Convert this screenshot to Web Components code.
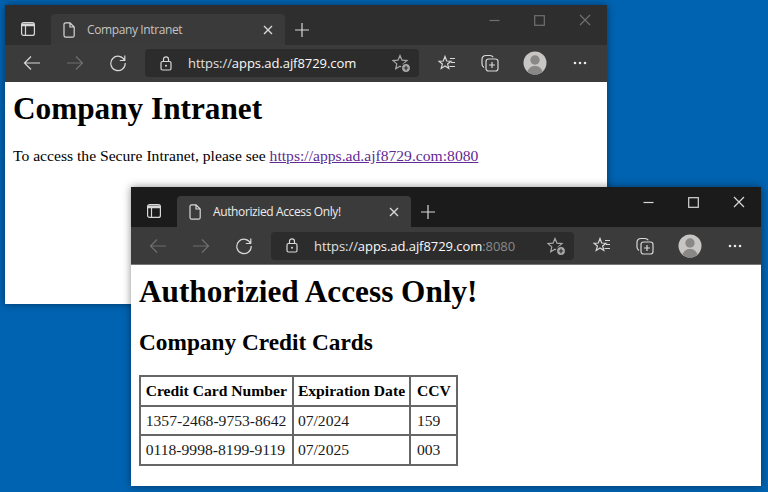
<!DOCTYPE html>
<html>
<head>
<meta charset="utf-8">
<title>Intranet</title>
<style>
  html, body { margin: 0; height: 100%; }
  body { background: #0063b1; overflow: hidden; position: relative; width: 768px; height: 492px; }
  browser-window.back { left: 5px; top: 5px; width: 602px; height: 299px; --address-width: 274px; }
  browser-window.front { left: 131px; top: 187px; width: 630px; height: 299px; --address-width: 303px; }
  a { color: #5f2a94; }
</style>
</head>
<body>
<browser-window class="back" tab-title="Company Intranet" host="https://apps.ad.ajf8729.com" inactive>
  <page-text>
    <h1 slot="title">Company Intranet</h1>
    <p>To access the Secure Intranet, please see <a href="#">https://apps.ad.ajf8729.com:8080</a></p>
  </page-text>
</browser-window>
<browser-window class="front" tab-title="Authorizied Access Only!" host="https://apps.ad.ajf8729.com" port=":8080">
  <page-text>
    <h1 slot="title">Authorizied Access Only!</h1>
    <h2>Company Credit Cards</h2>
    <card-table></card-table>
  </page-text>
</browser-window>

<template id="browser-window-tpl">
  <style>
    :host {
      display: flex;
      flex-direction: column;
      position: absolute;
      background: #fff;
      box-shadow: 0 0 8px rgba(0, 0, 0, .45);
      font-family: "Open Sans", "Noto Sans", sans-serif;
    }
    .strip { height: 40px; background: #1b1b1b; display: flex; align-items: flex-end; flex: none; position: relative; }
    :host([inactive]) .strip { background: #2e2e2e; }
    .tabs-btn { width: 44px; height: 32px; display: flex; align-items: center; justify-content: center; margin-left: 1px; margin-right: 1px; flex: none; }
    .tab { width: 234px; height: 31px; background: #3b3b3b; border-radius: 4px 4px 0 0; display: flex; align-items: center; flex: none; color: #ececec; font-size: 12px; letter-spacing: -.38px; }
    :host([inactive]) .tab { background: #3a3a3a; color: #c4c4c4; }
    .tab .page { margin-left: 12px; margin-right: 12px; flex: none; }
    .tab .label { flex: 1; white-space: nowrap; }
    .tab .close { margin-right: 12px; flex: none; }
    .plus { margin: 0 0 7px 9px; flex: none; }
    .caption { position: absolute; top: 0; right: 0; display: flex; }
    .caption span { width: 45px; height: 30px; display: flex; align-items: center; justify-content: center; }
    .bar { height: 38px; background: #3b3b3b; display: flex; align-items: center; flex: none; border-bottom: 1px solid #777; box-sizing: border-box; padding-left: 5px; }
    :host([inactive]) .bar { height: 37px; border-bottom-color: #3b3b3b; }
    .nav { width: 43px; display: flex; justify-content: center; flex: none; }
    .address { width: var(--address-width); height: 28px; margin-left: 6px; background: #2c2c2c; border-radius: 4px; display: flex; align-items: center; flex: none; position: relative; box-sizing: border-box; padding-left: 15px; font-size: 13px; font-weight: 500; color: #fafafa; white-space: nowrap; letter-spacing: -.06px; }
    .address .lock { margin-right: 16px; flex: none; }
    .address .port { color: #8a8a8a; font-weight: 400; }
    .address .scheme { color: #e0e0e0; }
    .address .fav { position: absolute; right: 8px; top: 5px; }
    .tools { display: flex; align-items: center; margin-left: 5px; }
    .tools span { width: 44.5px; display: flex; justify-content: center; align-items: center; }
    .tools .star { margin-left: 2px; }
    .tools .coll { margin-right: 2px; }
    .content { flex: 1; min-height: 0; overflow: hidden; background: #fff; }
    svg { display: block; fill: none; stroke: #d8d8d8; stroke-width: 1.2; }
    :host([inactive]) .caption svg { stroke: #707070; }
    .dim svg { stroke: #6f6f6f; }
    :host([inactive]) .dim-back svg { stroke: #d8d8d8; }
    :host(:not([inactive])) .dim-back svg { stroke: #6f6f6f; }
  </style>
  <div class="strip">
    <div class="tabs-btn">
      <svg width="16" height="16" viewBox="0 0 16 16"><rect x="1.6" y="1.6" width="12.8" height="12.8" rx="2"/><path d="M5.5 5v9.4M1.6 4.600h12.800"/><path d="M2 2.500h12v2H2z" fill="#d8d8d8" stroke="none"/></svg>
    </div>
    <div class="tab">
      <svg class="page" width="12" height="16" viewBox="0 0 12 16"><path d="M1 2.400a1.600 1.600 0 0 1 1.600-1.600H7L11.200 5v8.400A1.800 1.800 0 0 1 9.400 15.200H2.800A1.800 1.800 0 0 1 1 13.400zM7 .8V5h4.200"/></svg>
      <span class="label" id="title"></span>
      <svg class="close" width="10" height="10" viewBox="0 0 10 10"><path d="M1 1l8 8M9 1l-8 8" stroke-width="1.400"/></svg>
    </div>
    <svg class="plus" width="16" height="16" viewBox="0 0 16 16"><path d="M8 1v14M1 8h14"/></svg>
    <div class="caption">
      <span><svg width="11" height="11" viewBox="0 0 11 11"><path d="M.5 5.500h10"/></svg></span>
      <span><svg width="11" height="11" viewBox="0 0 11 11"><rect x=".7" y=".7" width="9.600" height="9.600"/></svg></span>
      <span><svg width="12" height="12" viewBox="0 0 12 12"><path d="M1 1l10 10M11 1L1 11"/></svg></span>
    </div>
  </div>
  <div class="bar">
    <span class="nav dim-back"><svg width="18" height="16" viewBox="0 0 18 16"><path d="M17 8H1.500M8 1.500L1.500 8 8 14.500"/></svg></span>
    <span class="nav dim"><svg width="18" height="16" viewBox="0 0 18 16"><path d="M1 8h15.500M10 1.500L16.500 8 10 14.500"/></svg></span>
    <span class="nav"><svg width="18" height="18" viewBox="0 0 18 18"><path d="M15.600 6.500A7.200 7.200 0 1 0 16.200 9M15.800 1.500v5h-5"/></svg></span>
    <div class="address">
      <svg class="lock" width="12" height="15" viewBox="0 0 12 15"><rect x="1" y="5.500" width="10" height="8.500" rx="1.500"/><path d="M3.500 5.500V3.300a2.500 2.500 0 0 1 5 0v2.200"/><circle cx="6" cy="9.800" r="1" fill="#d8d8d8" stroke="none"/></svg>
      <span><span class="scheme">https://</span><span id="host"></span><span class="port" id="port"></span></span>
      <svg class="fav" width="19" height="19" viewBox="0 0 19 19"><path d="M8 1.500l2 4.700 5 .4-3.800 3.300 1 4.900L8 12.300l-4.300 2.500 1.100-4.900L1 6.600l5-.4z" stroke="#a8a8a8"/><circle cx="14" cy="14" r="4.500" fill="#a8a8a8" stroke="#2c2c2c"/><path d="M14 11.800v4.400M11.800 14h4.400" stroke="#2c2c2c"/></svg>
    </div>
    <div class="tools">
      <span><svg class="star" width="18" height="17" viewBox="0 0 18 17"><path d="M7 1.500L8.700 6l4.300.2-3.400 2.800 1.200 4.300L7 10.900l-3.800 2.500 1.200-4.400L1 6.200 5.300 6zM12 3.500h5M13 7.500h4M11.500 11.500h5.500"/></svg></span>
      <span><svg class="coll" width="18" height="18" viewBox="0 0 18 18"><path d="M3 13.500C1.500 12.500 1 11.500 1 10V5.500C1 3 2.500 1.500 5 1.500h4c1.500 0 2.500.5 3.300 1.800"/><rect x="5" y="5" width="12" height="12" rx="2.500"/><path d="M11 8v6M8 11h6"/></svg></span>
      <span><svg width="24" height="24" viewBox="0 0 24 24" style="stroke:none"><circle cx="12" cy="12" r="11.500" fill="#c8c6c4"/><circle cx="12" cy="9" r="4.700" fill="#8a8886"/><path d="M4.500 20.700C5.500 16.800 8.500 15 12 15s6.500 1.800 7.500 5.700a11.500 11.500 0 0 1-15 0z" fill="#8a8886"/></svg></span>
      <span><svg width="14" height="4" viewBox="0 0 14 4" style="stroke:none;fill:#e8e8e8"><circle cx="2" cy="2" r="1.300"/><circle cx="7" cy="2" r="1.300"/><circle cx="12" cy="2" r="1.300"/></svg></span>
    </div>
  </div>
  <div class="content"><slot></slot></div>
</template>

<template id="page-text-tpl">
  <style>
    :host { display: block; padding: 8px; font-family: "Liberation Serif", "Times New Roman", serif; font-size: 15.63px; color: #000; }
    ::slotted(h1) { font-size: 31.25px; font-weight: bold; line-height: 36px; margin: 1px 0 0; }
    ::slotted(p) { margin: 20px 0 0; line-height: 18px; }
    ::slotted(h2) { font-size: 23.3px; font-weight: bold; line-height: 27px; margin: 19px 0 0; }
    ::slotted(card-table) { margin-top: 19px; }
  </style>
  <slot name="title"></slot>
  <slot></slot>
</template>

<template id="card-table-tpl">
  <style>
    :host { display: block; font-family: "Liberation Serif", "Times New Roman", serif; font-size: 15.63px; color: #000; }
    table { border-collapse: collapse; border: 2px solid #666; }
    th, td { border: 2px solid #666; padding: 5px 4.7px; text-align: left; line-height: 17.5px; white-space: nowrap; }
    th:nth-child(2), td:nth-child(2) { padding: 5px 4.3px; }
    th:nth-child(3), td:nth-child(3) { padding: 5px 5.6px; }
    th { font-weight: bold; }
    td { color: #1a1a1a; }
  </style>
  <table>
    <tr><th>Credit Card Number</th><th>Expiration Date</th><th>CCV</th></tr>
    <tr><td>1357-2468-9753-8642</td><td>07/2024</td><td>159</td></tr>
    <tr><td>0118-9998-8199-9119</td><td>07/2025</td><td>003</td></tr>
  </table>
</template>

<script>
  class BrowserWindow extends HTMLElement {
    constructor() {
      super();
      this.shadow = this.attachShadow({ mode: 'open' });
      this.shadow.appendChild(document.getElementById('browser-window-tpl').content.cloneNode(true));
    }

    connectedCallback() {
      this.shadow.getElementById('title').textContent = this.getAttribute('tab-title');
      this.shadow.getElementById('host').textContent = this.getAttribute('host').replace('https://', '');
      this.shadow.getElementById('port').textContent = this.getAttribute('port') || '';
    }
  }

  class PageText extends HTMLElement {
    constructor() {
      super();
      this.attachShadow({ mode: 'open' }).appendChild(document.getElementById('page-text-tpl').content.cloneNode(true));
    }
  }

  class CardTable extends HTMLElement {
    constructor() {
      super();
      this.attachShadow({ mode: 'open' }).appendChild(document.getElementById('card-table-tpl').content.cloneNode(true));
    }
  }

  customElements.define('browser-window', BrowserWindow);
  customElements.define('page-text', PageText);
  customElements.define('card-table', CardTable);
</script>
</body>
</html>
